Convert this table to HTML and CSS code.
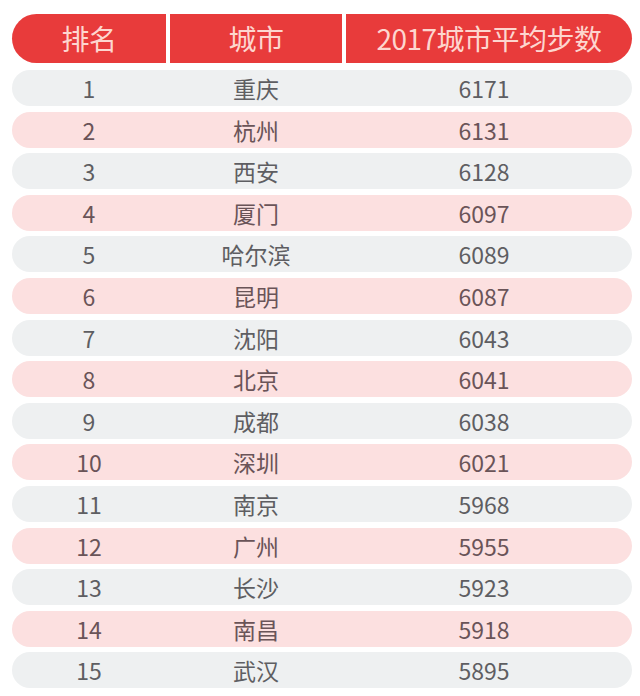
FILE: index.html
```html
<!DOCTYPE html>
<html lang="zh-CN">
<head>
<meta charset="utf-8">
<title>2017城市平均步数</title>
<link rel="stylesheet" href="styles.css">
</head>
<body>
<div class="table">
  <div class="head">
    <div class="hcell">排名</div>
    <div class="hcell">城市</div>
    <div class="hcell">2017城市平均步数</div>
  </div>
  <div class="rows">
    <div class="row gray"><span>1</span><span>重庆</span><span>6171</span></div>
    <div class="row pink"><span>2</span><span>杭州</span><span>6131</span></div>
    <div class="row gray"><span>3</span><span>西安</span><span>6128</span></div>
    <div class="row pink"><span>4</span><span>厦门</span><span>6097</span></div>
    <div class="row gray"><span>5</span><span>哈尔滨</span><span>6089</span></div>
    <div class="row pink"><span>6</span><span>昆明</span><span>6087</span></div>
    <div class="row gray"><span>7</span><span>沈阳</span><span>6043</span></div>
    <div class="row pink"><span>8</span><span>北京</span><span>6041</span></div>
    <div class="row gray"><span>9</span><span>成都</span><span>6038</span></div>
    <div class="row pink"><span>10</span><span>深圳</span><span>6021</span></div>
    <div class="row gray"><span>11</span><span>南京</span><span>5968</span></div>
    <div class="row pink"><span>12</span><span>广州</span><span>5955</span></div>
    <div class="row gray"><span>13</span><span>长沙</span><span>5923</span></div>
    <div class="row pink"><span>14</span><span>南昌</span><span>5918</span></div>
    <div class="row gray"><span>15</span><span>武汉</span><span>5895</span></div>
  </div>
</div>
</body>
</html>
```
FILE: styles.css
```css
html, body {
  margin: 0;
  padding: 0;
  background: #ffffff;
}
body {
  font-family: "Noto Sans CJK SC", "Noto Sans", sans-serif;
}
.table {
  width: 620px;
  margin: 14px 0 0 12px;
  display: flex;
  flex-direction: column;
  gap: 7px;
}
.head {
  display: grid;
  grid-template-columns: 154px 172px 286px;
  column-gap: 4px;
  height: 49px;
}
.hcell {
  background: #e83b3b;
  color: #fdd6cf;
  font-size: 28px;
  line-height: 49px;
  text-align: center;
  letter-spacing: -0.5px;
}
.hcell:first-child {
  border-radius: 25px 0 0 25px;
}
.hcell:last-child {
  border-radius: 0 25px 25px 0;
}
.rows {
  display: flex;
  flex-direction: column;
  gap: 5.6px;
}
.row {
  display: grid;
  grid-template-columns: 154px 172px 286px;
  column-gap: 4px;
  height: 36px;
  border-radius: 18px;
  align-items: center;
  font-size: 23px;
  line-height: 36px;
  color: #5e5e62;
}
.row span {
  text-align: center;
}
.row span:last-child {
  padding-right: 10px;
}
.gray {
  background: #eef0f1;
}
.pink {
  background: #fce0e0;
  color: #6a5458;
}
```
